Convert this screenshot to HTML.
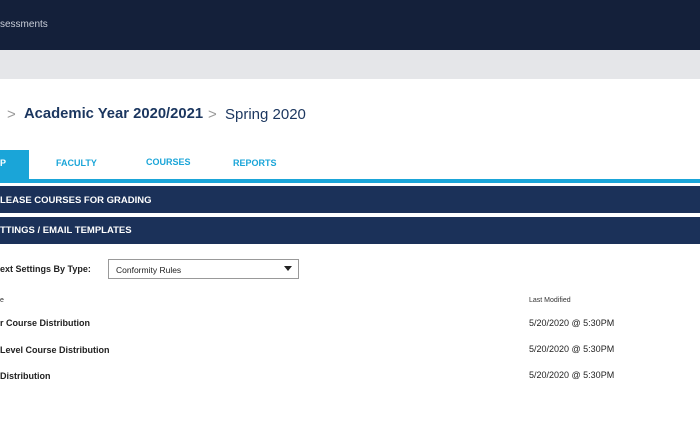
<!DOCTYPE html>
<html><head><style>
*{margin:0;padding:0;box-sizing:border-box}
body{width:700px;height:441px;overflow:hidden;background:#fff;font-family:"Liberation Sans",Arial,sans-serif;position:relative}
.a{position:absolute;white-space:nowrap}
</style></head><body>
<div class="a" style="left:0;top:0;width:700px;height:50px;background:#14203a"></div>
<div class="a" style="left:0;top:19px;font-size:10px;color:#c9ced8">sessments</div>
<div class="a" style="left:0;top:50px;width:700px;height:29px;background:#e5e6e9"></div>
<div class="a" style="left:7px;top:106px;font-size:15px;color:#999">&gt;</div>
<div class="a" style="left:24px;top:106px;font-size:14.8px;font-weight:bold;color:#1b365f">Academic Year 2020/2021</div>
<div class="a" style="left:208px;top:106px;font-size:15px;color:#999">&gt;</div>
<div class="a" style="left:225px;top:106px;font-size:15px;color:#1b365f">Spring 2020</div>
<div class="a" style="left:0;top:150px;width:29px;height:32px;background:#1aa5d8"></div>
<div class="a" style="left:0;top:158px;font-size:9px;font-weight:bold;color:#fff">P</div>
<div class="a" style="left:56px;top:158px;font-size:9px;font-weight:bold;color:#1aa5d8">FACULTY</div>
<div class="a" style="left:146px;top:157px;font-size:9px;font-weight:bold;color:#1aa5d8">COURSES</div>
<div class="a" style="left:233px;top:158px;font-size:9px;font-weight:bold;color:#1aa5d8">REPORTS</div>
<div class="a" style="left:0;top:179px;width:700px;height:4px;background:#1aa5d8"></div>
<div class="a" style="left:0;top:186px;width:700px;height:27px;background:#1b3159"></div>
<div class="a" style="left:0;top:195px;font-size:9.5px;font-weight:bold;color:#fff">LEASE COURSES FOR GRADING</div>
<div class="a" style="left:0;top:217px;width:700px;height:27px;background:#1b3159"></div>
<div class="a" style="left:0;top:225px;font-size:9.5px;font-weight:bold;color:#fff">TTINGS / EMAIL TEMPLATES</div>
<div class="a" style="left:0;top:264px;font-size:9px;font-weight:bold;color:#222">ext Settings By Type:</div>
<div class="a" style="left:108px;top:259px;width:191px;height:20px;border:1px solid #999;background:#fff"></div>
<div class="a" style="left:116px;top:265px;font-size:8.5px;color:#222">Conformity Rules</div>
<div class="a" style="left:284px;top:266px;width:0;height:0;border-left:4px solid transparent;border-right:4px solid transparent;border-top:5px solid #222"></div>
<div class="a" style="left:0;top:297px;font-size:7px;color:#333">e</div>
<div class="a" style="left:529px;top:297px;font-size:7px;color:#333">Last Modified</div>
<div class="a" style="left:0;top:318px;font-size:9px;font-weight:bold;color:#222">r Course Distribution</div>
<div class="a" style="left:529px;top:318px;font-size:9px;color:#222">5/20/2020 @ 5:30PM</div>
<div class="a" style="left:0;top:345px;font-size:9px;font-weight:bold;color:#222">Level Course Distribution</div>
<div class="a" style="left:529px;top:344px;font-size:9px;color:#222">5/20/2020 @ 5:30PM</div>
<div class="a" style="left:0;top:371px;font-size:9px;font-weight:bold;color:#222">Distribution</div>
<div class="a" style="left:529px;top:370px;font-size:9px;color:#222">5/20/2020 @ 5:30PM</div>
</body></html>
